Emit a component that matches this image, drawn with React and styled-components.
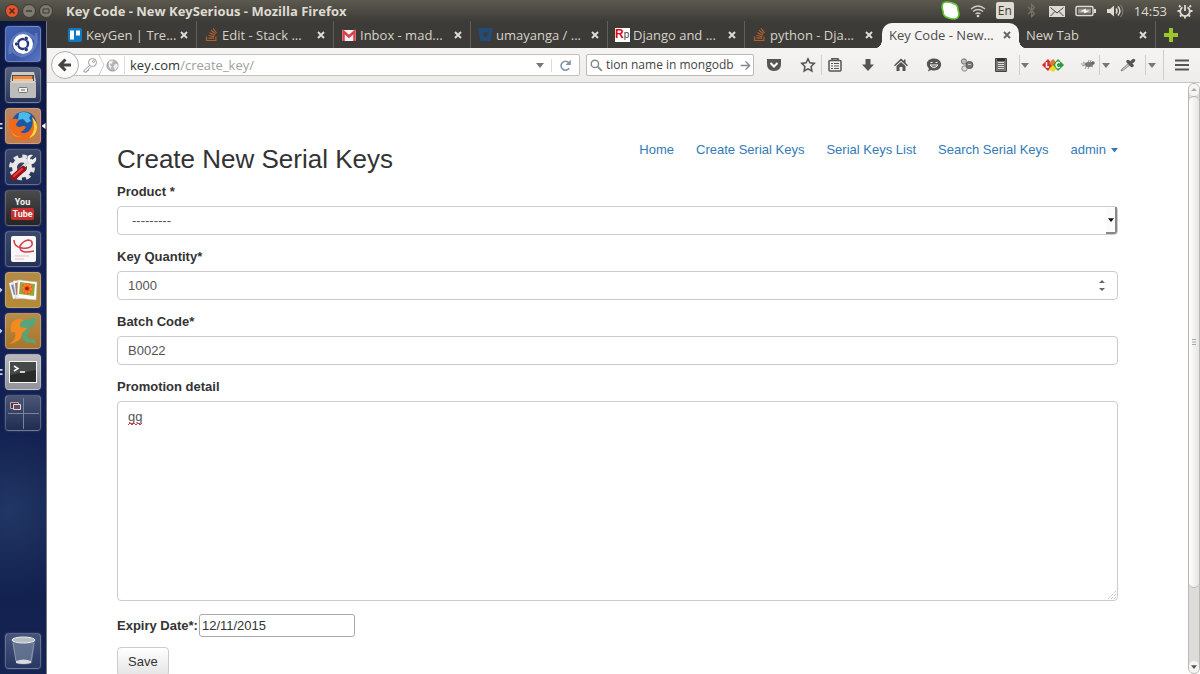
import React, { useState } from "react";
import styled, { createGlobalStyle } from "styled-components";
import { FaBluetoothB, FaBitbucket, FaStackOverflow } from "react-icons/fa";

const GlobalStyle = createGlobalStyle`
  * {
    box-sizing: border-box;
  }

  body {
    margin: 0;
    background: #fff;
    overflow: hidden;
  }

  button, input, select, textarea {
    font: inherit;
    color: inherit;
    margin: 0;
  }
`;

const Desktop = styled.div`
  display: flex;
  flex-direction: column;
  height: 100vh;
  font: 13px/18px "Open Sans", "Noto Sans", sans-serif;
  color: #dfdbd2;
`;

/* top panel */

const Panel = styled.header`
  display: flex;
  align-items: center;
  flex: 0 0 21px;
  padding: 0 7px 0 5px;
  background: linear-gradient(#5c594f, #3d3c37);
`;

const WindowButtons = styled.div`
  display: flex;
  gap: 3px;
  width: 61px;
`;

const WindowButton = styled.button`
  display: flex;
  padding: 0;
  width: 14px;
  height: 14px;
  border: 1px solid #3a3933;
  border-radius: 50%;
  background: ${({ $close }) => ($close ? "#e9542a" : "#7d7a70")};
`;

const WindowTitle = styled.div`
  flex: 1;
  font-weight: 700;
`;

const Indicators = styled.div`
  display: flex;
  align-items: center;
  gap: 10px;
`;

const Language = styled.span`
  width: 18px;
  border-radius: 2px;
  background: #dfdbd2;
  color: #3c3b37;
  font-size: 12px;
  line-height: 17px;
  text-align: center;
`;

const Workspace = styled.div`
  display: flex;
  flex: 1;
  min-height: 0;
`;

/* launcher */

const Launcher = styled.nav`
  display: flex;
  flex-direction: column;
  align-items: center;
  gap: 5px;
  flex: 0 0 47px;
  padding: 5px 1px 5px 0;
  border-right: 1px solid #77777c;
  background: radial-gradient(circle at 20% 75%, #223766, transparent 90px),
    linear-gradient(#0c1740, #13225a 45%, #101d49 75%, #142453);
`;

const LauncherTile = styled.button`
  position: relative;
  display: flex;
  align-items: center;
  justify-content: center;
  flex: 0 0 36px;
  width: 36px;
  padding: 0;
  border: 1px solid rgba(255, 255, 255, 0.22);
  border-radius: 4px;
  background: ${({ $tint }) => $tint};
  box-shadow: 0 0 2px rgba(255, 255, 255, 0.25);

  &:last-child {
    margin-top: auto;
  }
`;

const RunningMark = styled.i`
  position: absolute;
  top: 14px;
  left: -6px;
  width: 3px;
  height: 6px;
  background: #c9d2e6;
  clip-path: ${({ $many }) =>
    $many
      ? "polygon(0 0, 100% 0, 100% 30%, 0 30%, 0 70%, 100% 70%, 100% 100%, 0 100%)"
      : "polygon(0 0, 100% 50%, 0 100%)"};
`;

const FocusMark = styled.i`
  position: absolute;
  top: 14px;
  right: -6px;
  width: 4px;
  height: 6px;
  background: #fff;
  clip-path: polygon(100% 0, 0 50%, 100% 100%);
`;

/* firefox */

const Browser = styled.main`
  display: flex;
  flex-direction: column;
  flex: 1;
  min-width: 0;
`;

const TabStrip = styled.div`
  display: flex;
  flex: 0 0 27px;
  padding-left: 13px;
  background: #3c3b37;
`;

const Tab = styled.div`
  display: flex;
  align-items: center;
  flex: 1 1 137px;
  min-width: 0;
  gap: 3px;
  padding: 0 8px 0 7px;
  color: #d6d2c9;
  border-right: 1px solid ${({ $line }) => ($line ? "#605f59" : "transparent")};
`;

const ActiveTab = styled(Tab)`
  position: relative;
  margin-top: 2px;
  padding-bottom: 2px;
  border: 0;
  border-radius: 10px 10px 0 0;
  background: #f5f4f3;
  color: #4c4c4c;

  &::before,
  &::after {
    content: "";
    position: absolute;
    bottom: 0;
    width: 6px;
    height: 8px;
  }

  &::before {
    right: 100%;
    background: radial-gradient(ellipse 6px 8px at 0 0, transparent 95%, #f5f4f3);
  }

  &::after {
    left: 100%;
    background: radial-gradient(ellipse 6px 8px at 100% 0, transparent 95%, #f5f4f3);
  }
`;

const TabLabel = styled.span`
  flex: 1;
  min-width: 0;
  overflow: hidden;
  white-space: nowrap;
`;

const TabClose = styled.button`
  display: flex;
  padding: 0;
  border: 0;
  background: none;
`;

const NewTab = styled.button`
  display: flex;
  align-items: center;
  flex: 0 0 44px;
  padding: 0 0 0 8px;
  border: 0;
  background: none;
`;

const Toolbar = styled.div`
  display: flex;
  align-items: center;
  flex: 0 0 35px;
  padding-left: 4px;
  background: linear-gradient(#f5f4f3, #eeedec);
  border-bottom: 1px solid #c9c7c4;
  color: #555;
`;

const BackButton = styled.button`
  display: flex;
  align-items: center;
  justify-content: center;
  z-index: 1;
  flex: 0 0 28px;
  height: 28px;
  margin-right: -8px;
  padding: 0;
  border: 1px solid #b1aeaa;
  border-radius: 50%;
  background: #fbfbfb;
`;

const AddressBar = styled.div`
  display: flex;
  align-items: center;
  flex: 1;
  height: 22px;
  padding-left: 10px;
  border: 1px solid #c4c1bd;
  border-radius: 2px;
  background: #fff;
`;

const Address = styled.div`
  flex: 1;
  margin-left: 5px;
  padding-left: 5px;
  border-left: 1px solid #dcdcdc;
  color: #a0a0a0;
`;

const Host = styled.span`
  color: #333;
`;

const Reload = styled.button`
  display: flex;
  align-items: center;
  justify-content: center;
  width: 28px;
  margin-left: 7px;
  padding: 0;
  border: 0;
  border-left: 1px solid #dcdcdc;
  background: none;
`;

const SearchBox = styled.label`
  display: flex;
  align-items: center;
  flex: 0 0 168px;
  min-width: 0;
  height: 22px;
  margin: 0 3px 0 6px;
  padding: 0 2px 0 3px;
  border: 1px solid #bdbab6;
  border-radius: 2px;
  background: #fff;
`;

const SearchInput = styled.input`
  flex: 1;
  width: 0;
  min-width: 0;
  padding: 0;
  padding-left: 3px;
  border: 0;
  outline: 0;
  background: none;
  color: #444;
  font-size: 12px;
`;

const ToolButton = styled.button`
  display: flex;
  align-items: center;
  justify-content: center;
  flex: 0 0 ${({ $width = 33 }) => $width}px;
  height: 20px;
  padding: 0;
  border: 0;
  border-left: ${({ $divided }) => ($divided ? "1px solid #cfcdca" : "0")};
  background: none;
`;

const ToolPair = styled.div`
  display: flex;
  margin: 0 3px 0 4px;
`;

const MenuButton = styled(ToolButton)`
  height: 30px;
  margin-left: 6px;
`;

/* page */

const Viewport = styled.div`
  display: flex;
  flex: 1;
  min-height: 0;
  background: #fff;
`;

const Page = styled.section`
  flex: 1;
  min-width: 0;
  overflow: hidden;
  padding: 58px 70px 0;
  font: 13px/18px "Liberation Sans", Arial, sans-serif;
  color: #333;
`;

const PageHeader = styled.div`
  display: flex;
  justify-content: space-between;
  align-items: flex-start;
  margin-bottom: 7px;
`;

const Heading = styled.h1`
  margin: 0;
  padding-top: 2px;
  font-size: 26px;
  font-weight: 400;
  line-height: 33px;
`;

const SiteNav = styled.nav`
  display: flex;
  gap: 22px;
`;

const NavLink = styled.a`
  display: flex;
  align-items: center;
  gap: 5px;
  color: #337ab7;
  text-decoration: none;
`;

const Field = styled.div`
  display: flex;
  flex-direction: column;
  margin-bottom: 13px;
`;

const Label = styled.label`
  margin-bottom: 5px;
  font-weight: 700;
`;

const Control = styled.div`
  position: relative;
  display: flex;
`;

const Input = styled.input`
  width: 100%;
  height: 29px;
  padding: 0 10px;
  border: 1px solid #ccc;
  border-radius: 4px;
  outline: 0;
  background: #fff;
  color: #555;
  appearance: textfield;

  &::-webkit-inner-spin-button {
    appearance: none;
  }
`;

const Select = styled(Input)`
  padding-left: 14px;
  appearance: none;
`;

const TextArea = styled(Input)`
  height: 200px;
  padding: 6px 10px;
  resize: none;
`;

const SelectArrow = styled.span`
  position: absolute;
  top: 1px;
  right: 1px;
  bottom: 1px;
  display: flex;
  align-items: center;
  justify-content: center;
  width: 11px;
  border-right: 2px solid #888;
  border-bottom: 2px solid #888;
  border-radius: 0 0 3px 0;
  background: #fbfbfb;
  pointer-events: none;
`;

const Spinner = styled.svg`
  position: absolute;
  top: 8px;
  right: 13px;
`;

const Squiggle = styled.svg`
  position: absolute;
  top: 21px;
  left: 11px;
`;

const Grip = styled.svg`
  position: absolute;
  right: 1px;
  bottom: 1px;
`;

const DateRow = styled.div`
  display: flex;
  align-items: center;
  margin-bottom: 10px;
`;

const DateLabel = styled.label`
  font-weight: 700;
`;

const DateInput = styled.input`
  width: 156px;
  height: 23px;
  margin-left: 1px;
  padding: 0 2px;
  border: 1px solid #aaa;
  border-radius: 3px;
  outline: 0;
`;

const SaveButton = styled.button`
  height: 30px;
  padding: 0 10px;
  border: 1px solid #ccc;
  border-radius: 4px;
  background: linear-gradient(#fff, #e4e4e4);
`;

const Scrollbar = styled.div`
  display: flex;
  flex-direction: column;
  flex: 0 0 12px;
  border: 1px solid #bbb8b4;
  border-radius: 6px;
  background: #dedcda;
`;

const ScrollStep = styled.button`
  display: flex;
  align-items: center;
  justify-content: center;
  flex: 0 0 12px;
  padding: 0;
  border: 0;
  border-radius: 5px;
  background: #f6f5f4;
`;

const ScrollTrack = styled.div`
  flex: 1;
`;

const ScrollThumb = styled.div`
  display: flex;
  align-items: center;
  justify-content: center;
  height: 87%;
  border: 1px solid #b5b2ae;
  border-width: 1px 0;
  border-radius: 5px;
  background: linear-gradient(90deg, #fff, #e7e5e3);
`;

/* icons */

const Svg = ({ size = 16, box = 16, width, children }) => (
  <svg
    width={width || size}
    height={size}
    viewBox={`0 0 ${width ? (width / size) * box : box} ${box}`}
    fill="none"
    aria-hidden="true"
  >
    {children}
  </svg>
);

const Cross = ({ color }) => (
  <Svg size={8} box={8}>
    <path d="M1 1l6 6M7 1L1 7" stroke={color} strokeWidth="2" />
  </Svg>
);

const Caret = ({ color = "#777", width = 8 }) => (
  <svg width={width} height={width / 2 + 1} viewBox="0 0 8 5" aria-hidden="true">
    <path d="M0 0h8L4 5z" fill={color} />
  </svg>
);

const UbuntuIcon = () => (
  <Svg size={34} box={34}>
    <path d="M4 27Q3 8 18 6q9 1 13 10M30 6q2 19-14 23-8-1-12-10" stroke="#8ea6dd" strokeWidth="3" opacity=".4" />
    <circle cx="17" cy="17" r="10" fill="#fff" />
    <circle cx="17" cy="17" r="5" stroke="#253b7e" strokeWidth="2.4" />
    <path d="M12 17H9M19.5 12.7L21 10M19.5 21.3L21 24" stroke="#fff" strokeWidth="4" />
    <g fill="#253b7e">
      <circle cx="10.6" cy="17" r="1.8" />
      <circle cx="20.2" cy="11.4" r="1.8" />
      <circle cx="20.2" cy="22.6" r="1.8" />
    </g>
  </Svg>
);

const FilesIcon = () => (
  <Svg size={34} box={34}>
    <path d="M6 4h22l2 9H4z" fill="#c9c9c7" />
    <path d="M6 7h22v7H6z" fill="#5c4a3d" />
    <path d="M7 8h19l1 6H7z" fill="#e8894a" />
    <path d="M7 11h20v3H7z" fill="#f7c08f" />
    <rect x="4" y="13" width="26" height="17" rx="1.5" fill="#bdbdbb" />
    <path d="M5 14h24" stroke="#e9e9e8" />
    <rect x="12.5" y="19.5" width="9" height="5" rx="1" fill="#efefef" stroke="#777" />
    <path d="M15 22h4" stroke="#666" />
  </Svg>
);

const FirefoxIcon = () => (
  <Svg size={34} box={34}>
    <circle cx="18" cy="15" r="12.5" fill="#1d57a5" />
    <path d="M13 4q7-3 12 2l-2 3 2 3-4 2-4-4-5 1z" fill="#4eb8e6" />
    <path d="M4 7q1 3 3 3 3-1 6 1l-3 4q0 3 4 3 4-2 6 0-2 4-6 5 6 3 10-2 4-5 2-13 5 5 4 11-1 12-13 12Q4 31 3 18 2 13 4 7z" fill="#ee6b1d" />
    <path d="M26 8q5 4 5 11-1 8-8 10 5-5 5-11 0-5-2-10z" fill="#fbd33c" />
    <path d="M4 19q2 8 11 9-9 1-11-9z" fill="#f9a62b" />
  </Svg>
);

const SettingsIcon = () => (
  <Svg size={34} box={34}>
    <circle cx="16" cy="17.500" r="11" stroke="#e4e4e4" strokeWidth="4" strokeDasharray="4.600 4.040" />
    <circle cx="16" cy="17.500" r="7.500" stroke="#e9e9e9" strokeWidth="5" />
    <path d="M14 20l9-9" stroke="#ddd" strokeWidth="3.500" />
    <path d="M27 5l-3 3q0 2 2 2l4-3q1 4-2 6-3 1-5-1-3-3-1-6 2-2 5-1z" fill="#f2f2f2" />
    <path d="M8 27l9-8" stroke="#a30f16" strokeWidth="6" strokeLinecap="round" />
    <path d="M8 26l8-7" stroke="#e13d40" strokeWidth="2" strokeLinecap="round" />
  </Svg>
);

const YouTubeTile = styled.span`
  display: flex;
  flex-direction: column;
  align-items: center;
  color: #f5f5f5;
  font: 700 9px/12px "Roboto", sans-serif;
`;

const TubeText = styled.span`
  padding: 0 1px;
  border-radius: 2px;
  background: #c4302f;
`;

const DocumentIcon = () => (
  <Svg size={34} box={34}>
    <rect x="5" y="4" width="25" height="26" rx="2" fill="#f8f8f8" />
    <path d="M8 8q0 7 8 8 8 1 10-3 1-5-4-5-5 1-8 6-1 5 5 6 5 0 9-1" stroke="#d63c49" strokeWidth="1.600" />
    <path d="M9 24h14M9 27h9" stroke="#e9babf" />
  </Svg>
);

const PhotosIcon = () => (
  <Svg size={34} box={34}>
    <path d="M3 10l8-2 4 16-8 2z" fill="#f4f4f4" />
    <path d="M5 12l4-1 2 10-3 1z" fill="#6a8ac0" />
    <path d="M7 8l9-1 2 18-8 1z" fill="#fff" stroke="#bbb" strokeWidth=".5" />
    <path d="M9 10l5-1v12l-4 1z" fill="#b37357" />
    <path d="M12 7l19 2-1 18-19-2z" fill="#fff" stroke="#bbb" strokeWidth=".5" />
    <path d="M14 9l15 2-1 12-15-2z" fill="#8eaa3c" />
    <circle cx="21" cy="15.500" r="5.500" fill="#f0601f" />
    <circle cx="21" cy="15.500" r="4" stroke="#f98b27" strokeWidth="2" strokeDasharray="2 1" />
    <circle cx="21" cy="15.500" r="1.800" fill="#8b2612" />
  </Svg>
);

const CompareIcon = () => (
  <Svg size={34} box={34}>
    <path d="M3 30q8-4 6-12H5Q3 6 13 5q6 0 8 5 1 7-5 9 0 9-13 11z" fill="#f28a20" />
    <path d="M14 13q-1-6 5-7 4 0 5-1 4-2 6-1 0 9-8 10-4 0-8-1z" fill="#55a57d" />
    <path d="M26 16q-8-2-10 5 0 9 12 8l3 1-3-5q-6 1-7-3 0-4 5-6z" fill="#55a57d" />
  </Svg>
);

const TerminalIcon = () => (
  <Svg size={34} box={34}>
    <rect x="3.500" y="6.500" width="27" height="21" fill="#282b2a" stroke="#f4f4f4" />
    <path d="M4 7h26v8L4 20z" fill="#454948" />
    <path d="M8 11l4 2.500L8 16M14 17h5" stroke="#fff" strokeWidth="1.500" />
  </Svg>
);

const WorkspacesIcon = () => (
  <Svg size={34} box={34}>
    <path d="M17.500 2v31M2 17.500h31" stroke="#7583a5" />
    <path d="M4.500 6.500h8v6h-8z" stroke="#c9a3a8" fill="#47374e" />
    <path d="M7.500 8.500h7v5h-7z" stroke="#e1dce0" fill="#694953" />
  </Svg>
);

const TrashIcon = () => (
  <Svg size={34} box={34}>
    <path d="M6 6h23l-3 23q-8 3-16 0z" fill="#7987a1" opacity=".65" />
    <ellipse cx="17.500" cy="6" rx="11.500" ry="3" fill="#b6bdc5" stroke="#eef0f1" />
    <path d="M7 9l3 18M28 9l-3 18" stroke="#b8c2d0" opacity=".5" />
    <path d="M10 27q8-3 15 0v2q-8 2-15 0z" fill="#d8dce0" />
  </Svg>
);

const launcherItems = [
  { name: "Dash", tint: "linear-gradient(135deg, #4364b7, #3b57a4 60%, #5b79c7)", icon: <UbuntuIcon /> },
  { name: "Files", tint: "linear-gradient(#56627e, #29365b)", icon: <FilesIcon /> },
  { name: "Firefox", tint: "linear-gradient(#b98766, #c17c49)", icon: <FirefoxIcon />, running: true, many: true, focus: true },
  { name: "System Settings", tint: "linear-gradient(#3b4869, #25335a)", icon: <SettingsIcon /> },
  {
    name: "YouTube",
    tint: "linear-gradient(#4a4a4b, #252528)",
    icon: (
      <YouTubeTile>
        <span>You</span>
        <TubeText>Tube</TubeText>
      </YouTubeTile>
    ),
  },
  { name: "Document Viewer", tint: "linear-gradient(#3b4869, #25335a)", icon: <DocumentIcon /> },
  { name: "Image Viewer", tint: "linear-gradient(#b18b4a, #b48a35)", icon: <PhotosIcon />, running: true },
  { name: "PyCharm", tint: "linear-gradient(#b58c49, #a9752c)", icon: <CompareIcon />, running: true },
  { name: "Terminal", tint: "linear-gradient(#b9b9bc, #92939b)", icon: <TerminalIcon />, running: true, many: true },
  { name: "Workspaces", tint: "linear-gradient(#4b5674, #202d53)", icon: <WorkspacesIcon /> },
  { name: "Trash", tint: "linear-gradient(#47557c, #283763)", icon: <TrashIcon /> },
];

const TrelloIcon = () => (
  <Svg>
    <rect x="1" y="1" width="14" height="14" rx="2" fill="#0d7ac4" />
    <path d="M3 3.500h4v9H3zM9 3.500h4v5H9z" fill="#fff" />
  </Svg>
);

const MailFavicon = () => (
  <Svg>
    <rect x="1" y="3" width="14" height="11" rx="1" fill="#f3f1f0" />
    <path d="M2.500 14V4.500L8 9.500l5.500-5V14" stroke="#d8404a" strokeWidth="2.500" />
  </Svg>
);

const RpIcon = styled.span`
  flex: 0 0 15px;
  height: 14px;
  background: #fff;
  color: #e30613;
  font: 700 12px/13px "Liberation Sans", sans-serif;

  span {
    color: #444;
    font-weight: 400;
    font-size: 10px;
  }
`;

const tabs = [
  { title: "KeyGen | Tre...", icon: <TrelloIcon />, line: true },
  { title: "Edit - Stack ...", icon: <FaStackOverflow size={15} color="#b0602b" />, line: true },
  { title: "Inbox - mad...", icon: <MailFavicon />, line: true },
  { title: "umayanga / ...", icon: <FaBitbucket size={15} color="#244b77" />, line: true },
  { title: "Django and ...", icon: <RpIcon>R<span>p</span></RpIcon>, line: true },
  { title: "python - Dja...", icon: <FaStackOverflow size={15} color="#b0602b" /> },
  { title: "Key Code - New...", active: true },
  { title: "New Tab", line: true },
];

const KeyIcon = () => (
  <Svg>
    <path d="M7.500 8.500L2 13.500V15h3v-1.500h1.500V12l2-2" stroke="#999" />
    <circle cx="10.500" cy="5.500" r="4" stroke="#999" />
    <circle cx="11.500" cy="4.500" r="1" stroke="#999" />
  </Svg>
);

const GlobeIcon = () => (
  <Svg size={13} box={14}>
    <circle cx="7" cy="7" r="6" fill="#b5b5b5" stroke="#999" />
    <path d="M3 3q2-2 5-1L6 5 4 6l2 2-1 3-2-3zM9 6l3-1 1 3-3 4-2-3z" fill="#eee" />
  </Svg>
);

const PocketIcon = () => (
  <Svg>
    <path d="M1 2h14v5q0 7-7 7T1 7z" fill="#555" />
    <path d="M4.500 6L8 9.500 11.500 6" stroke="#fff" strokeWidth="2" />
  </Svg>
);

const StarIcon = () => (
  <Svg>
    <path d="M8 1.800l1.900 4 4.400.6-3.200 3.100.8 4.500L8 11.800 4.100 14l.8-4.500-3.200-3.100 4.400-.6z" stroke="#555" strokeWidth="1.500" />
  </Svg>
);

const ListIcon = () => (
  <Svg>
    <rect x="2" y="3.500" width="12" height="10.500" rx="1" stroke="#555" strokeWidth="1.500" />
    <path d="M5 3.500V1.700h6v1.800" stroke="#555" strokeWidth="1.500" />
    <path d="M4 6.500h2M7 6.500h5M4 9h2M7 9h5M4 11.500h2M7 11.500h5" stroke="#555" />
  </Svg>
);

const DownloadIcon = () => (
  <Svg>
    <path d="M5.500 2h5v5.500H14L8 14 2 7.500h3.500z" fill="#555" />
  </Svg>
);

const HomeIcon = () => (
  <Svg>
    <path d="M8 1.500L1 8.300l1 1L8 3.800l6 5.500 1-1-2.500-2.500V2.500H11V4z" fill="#555" />
    <path d="M3.500 9L8 5l4.500 4v5H9.500v-4h-3v4h-3z" fill="#555" />
  </Svg>
);

const ChatIcon = () => (
  <Svg>
    <path d="M8 1.500c9.500 0 9.500 12 0 12-1 0-2 0-3-.5L2 14.500l1-3C-1.500 7 1.500 1.500 8 1.500z" fill="#555" />
    <path d="M4.500 5.500h2M9.500 5.500h2M4 8q4 5 8 0z" stroke="#fff" />
  </Svg>
);

const ButtonsIcon = () => (
  <Svg>
    <circle cx="5" cy="4.500" r="2.700" fill="#bbb" stroke="#777" />
    <circle cx="5.500" cy="11.500" r="2.700" fill="#ddd" stroke="#888" />
    <circle cx="10.500" cy="8" r="3.500" fill="#777" stroke="#555" />
    <path d="M9 7.500h3" stroke="#ccc" />
  </Svg>
);

const NotesIcon = () => (
  <Svg>
    <path d="M2.500 1.500h11v13h-11z" fill="#777" stroke="#444" />
    <path d="M5 5h6v8H5z" fill="#ddd" />
    <path d="M5 6.500h6M5 8.500h6M5 10.500h6M5 12.500h6" stroke="#666" />
    <path d="M4 1v3h8V1" fill="#333" />
  </Svg>
);

const DiamondsIcon = () => (
  <Svg width={24}>
    <path d="M1 8l6-6 5 6-5 6z" fill="#d52d2d" />
    <path d="M12 2l4 4-4 4-4-4z" fill="#e7792e" />
    <path d="M12 8l4 4-4 3-4-3z" fill="#f0d91f" />
    <path d="M12 8l5-6 6 6-6 6z" fill="#2b9c3b" />
    <path d="M5.500 5v5H8M19 6q-3-2-4 2 1 4 4 2" stroke="#fff" strokeWidth="1.500" />
  </Svg>
);

const BugIcon = () => (
  <Svg>
    <path d="M3 5l10 5M2 9l11-4M5 12l4-9M8 12l3-9M1 7h5" stroke="#999" />
    <ellipse cx="9" cy="7.500" rx="4" ry="2.500" fill="#777" />
    <circle cx="13" cy="6" r="1.700" fill="#666" />
  </Svg>
);

const DropperIcon = () => (
  <Svg>
    <path d="M1 14l1-2 7-6 1.500 1.500L3.500 13z" fill="#ccc" stroke="#888" />
    <path d="M8 4.500L12 8.500M10 6.500l3.500-3" stroke="#555" strokeWidth="3.500" strokeLinecap="round" />
  </Svg>
);

const WifiIcon = () => (
  <Svg>
    <path d="M1 6q7-6 14 0M3 8.500q5-4 10 0M5.500 11q2.500-2 5 0" stroke="#cfccc4" strokeWidth="1.300" />
    <circle cx="8" cy="13" r="1.300" fill="#dfdbd2" />
  </Svg>
);

const EnvelopeIcon = () => (
  <Svg>
    <path d="M0 3h16v11H0z" fill="#dfdbd2" />
    <path d="M1.500 4.500L8 10l6.500-5.500M1.500 13L6 8.500M14.500 13L10 8.500" stroke="#45443f" />
  </Svg>
);

const BatteryIcon = () => (
  <Svg width={21}>
    <rect x="1" y="3.500" width="17" height="9" rx="1.500" stroke="#dfdbd2" strokeWidth="1.500" />
    <path d="M19 6h2v4h-2z" fill="#dfdbd2" />
    <path d="M3 5.500h13v5H3z" fill="#98958c" />
    <path d="M5 8.500l6-3-.5 2H15l-6 3 .5-2z" fill="#fff" />
  </Svg>
);

const VolumeIcon = () => (
  <Svg width={18}>
    <path d="M1 6h3l4-3.500v11L4 10H1z" fill="#dfdbd2" />
    <path d="M10 5.500q2 2.500 0 5M12 3.500q4 4.500 0 9" stroke="#dfdbd2" strokeWidth="1.500" />
    <path d="M14.500 2q5 6 0 12" stroke="#88857c" />
  </Svg>
);

const PowerIcon = () => (
  <Svg>
    <path d="M5.500 4.200a4.800 4.800 0 1 0 5 0M8 2v6" stroke="#dfdbd2" strokeWidth="1.800" />
    <path d="M3.500 4L2 2.500M12.500 4L14 2.500M3 8H.5M13 8h2.500M4.500 12L3 13.500M11.500 12l1.500 1.500M8 13v2.500" stroke="#dfdbd2" strokeWidth="1.800" />
  </Svg>
);

const SkypeIcon = () => (
  <Svg size={19} box={18}>
    <path d="M5 1q3 0 6 1 5 1 5 6l1 4q0 4-4 5-3 0-6-1-5-1-5-6L1 6q0-5 4-5z" fill="#fff" stroke="#61c832" strokeWidth="1.500" />
  </Svg>
);

const navItems = ["Home", "Create Serial Keys", "Serial Keys List", "Search Serial Keys"];

const TopPanel = () => (
  <Panel>
    <WindowButtons>
      <WindowButton $close aria-label="Close window">
        <Svg size={12} box={12}>
          <path d="M3.500 3.500l5 5M8.500 3.500l-5 5" stroke="#4b2b1f" strokeWidth="1.500" />
        </Svg>
      </WindowButton>
      <WindowButton aria-label="Minimize">
        <Svg size={12} box={12}>
          <path d="M3 6h6" stroke="#3c3b37" strokeWidth="1.500" />
        </Svg>
      </WindowButton>
      <WindowButton aria-label="Restore">
        <Svg size={12} box={12}>
          <path d="M3 4h6v4H3z" stroke="#3c3b37" />
        </Svg>
      </WindowButton>
    </WindowButtons>
    <WindowTitle>Key Code - New KeySerious - Mozilla Firefox</WindowTitle>
    <Indicators>
      <SkypeIcon />
      <WifiIcon />
      <Language>En</Language>
      <FaBluetoothB size={15} color="#77746b" />
      <EnvelopeIcon />
      <BatteryIcon />
      <VolumeIcon />
      <span>14:53</span>
      <PowerIcon />
    </Indicators>
  </Panel>
);

const BrowserToolbar = () => {
  const [query, setQuery] = useState("tion name in mongodb");
  return (
    <Toolbar>
      <BackButton aria-label="Back">
        <Svg>
          <path d="M14 8H4M8.500 2.500L3 8l5.500 5.500" stroke="#444" strokeWidth="3" />
        </Svg>
      </BackButton>
      <AddressBar>
        <KeyIcon />
        <Svg width={8} size={20} box={20}>
          <path d="M1 0l5 10-5 10" stroke="#ccc" />
        </Svg>
        <GlobeIcon />
        <Address>
          <Host>key.com</Host>/create_key/
        </Address>
        <Caret />
        <Reload aria-label="Reload">
          <Svg size={13}>
            <path d="M12.500 11.500A5.500 5.500 0 1 1 12 4.500" stroke="#8394a5" strokeWidth="2" />
            <path d="M14.500 1v6.500H8z" fill="#8394a5" />
          </Svg>
        </Reload>
      </AddressBar>
      <SearchBox>
        <Svg size={13}>
          <circle cx="6" cy="6" r="4.500" stroke="#888" strokeWidth="1.800" />
          <path d="M9.500 9.500l5 5" stroke="#888" strokeWidth="2.200" />
        </Svg>
        <SearchInput aria-label="Search" value={query} onChange={(e) => setQuery(e.target.value)} />
        <Svg size={11}>
          <path d="M1 8h12M8 2l6 6-6 6" stroke="#7a8a99" strokeWidth="2" />
        </Svg>
      </SearchBox>
      <ToolButton aria-label="Pocket"><PocketIcon /></ToolButton>
      <ToolPair>
        <ToolButton $width={27} aria-label="Bookmark"><StarIcon /></ToolButton>
        <ToolButton $width={27} $divided aria-label="Bookmarks list"><ListIcon /></ToolButton>
      </ToolPair>
      <ToolButton aria-label="Downloads"><DownloadIcon /></ToolButton>
      <ToolButton aria-label="Home"><HomeIcon /></ToolButton>
      <ToolButton aria-label="Hello"><ChatIcon /></ToolButton>
      <ToolButton aria-label="Share"><ButtonsIcon /></ToolButton>
      <ToolButton $width={36} aria-label="Notes"><NotesIcon /></ToolButton>
      <ToolButton $width={10} $divided aria-label="Notes menu"><Caret /></ToolButton>
      <ToolButton $width={48} aria-label="Colors"><DiamondsIcon /></ToolButton>
      <ToolButton $width={22} aria-label="Firebug"><BugIcon /></ToolButton>
      <ToolButton $width={12} $divided aria-label="Firebug menu"><Caret /></ToolButton>
      <ToolButton $width={34} aria-label="Color picker"><DropperIcon /></ToolButton>
      <ToolButton $width={12} $divided aria-label="Color picker menu"><Caret /></ToolButton>
      <MenuButton $width={37} $divided aria-label="Menu">
        <Svg>
          <path d="M1 3.500h14M1 8h14M1 12.500h14" stroke="#555" strokeWidth="2" />
        </Svg>
      </MenuButton>
    </Toolbar>
  );
};

const KeyForm = () => {
  const [values, setValues] = useState({
    product: "",
    quantity: "1000",
    batch: "B0022",
    promotion: "gg",
    expiry: "12/11/2015",
  });
  const onChange = (e) => setValues({ ...values, [e.target.name]: e.target.value });

  return (
    <form onSubmit={(e) => e.preventDefault()}>
      <Field>
        <Label htmlFor="product">Product *</Label>
        <Control>
          <Select as="select" id="product" name="product" value={values.product} onChange={onChange}>
            <option value="">---------</option>
          </Select>
          <SelectArrow>
            <Caret color="#111" width={6} />
          </SelectArrow>
        </Control>
      </Field>
      <Field>
        <Label htmlFor="quantity">Key Quantity*</Label>
        <Control>
          <Input type="number" id="quantity" name="quantity" value={values.quantity} onChange={onChange} />
          <Spinner width="6" height="13" viewBox="0 0 6 13">
            <path d="M0 4l3-3 3 3zM0 9l3 3 3-3z" fill="#666" />
          </Spinner>
        </Control>
      </Field>
      <Field>
        <Label htmlFor="batch">Batch Code*</Label>
        <Input id="batch" name="batch" value={values.batch} onChange={onChange} />
      </Field>
      <Field>
        <Label htmlFor="promotion">Promotion detail</Label>
        <Control>
          <TextArea as="textarea" id="promotion" name="promotion" spellCheck={false} value={values.promotion} onChange={onChange} />
          <Squiggle width="15" height="4" viewBox="0 0 15 4" fill="none">
            <path d="M0 3l2-2 2 2 2-2 2 2 2-2 2 2 2-2" stroke="#e0383e" />
          </Squiggle>
          <Grip width="10" height="10" viewBox="0 0 10 10">
            <path d="M1 9L9 1M4 9l5-5M7 9l2-2" stroke="#aaa" strokeDasharray="1 1" />
          </Grip>
        </Control>
      </Field>
      <DateRow>
        <DateLabel htmlFor="expiry">Expiry Date*:</DateLabel>
        <DateInput id="expiry" name="expiry" value={values.expiry} onChange={onChange} />
      </DateRow>
      <SaveButton type="submit">Save</SaveButton>
    </form>
  );
};

export default function App() {
  return (
    <Desktop>
      <GlobalStyle />
      <TopPanel />
      <Workspace>
        <Launcher>
          {launcherItems.map(({ name, tint, icon, running, many, focus }) => (
            <LauncherTile key={name} $tint={tint} aria-label={name}>
              {icon}
              {running && <RunningMark $many={many} />}
              {focus && <FocusMark />}
            </LauncherTile>
          ))}
        </Launcher>
        <Browser>
          <TabStrip>
            {tabs.map(({ title, icon, active, line }) => {
              const Item = active ? ActiveTab : Tab;
              return (
                <Item key={title} $line={line}>
                  {icon}
                  <TabLabel>{title}</TabLabel>
                  <TabClose aria-label="Close tab">
                    <Cross color={active ? "#666" : "#dfdbd2"} />
                  </TabClose>
                </Item>
              );
            })}
            <NewTab aria-label="Open a new tab">
              <Svg size={14} box={14}>
                <path d="M5 0h4v5h5v4H9v5H5V9H0V5h5z" fill="#9cc827" />
              </Svg>
            </NewTab>
          </TabStrip>
          <BrowserToolbar />
          <Viewport>
            <Page>
              <PageHeader>
                <Heading>Create New Serial Keys</Heading>
                <SiteNav>
                  {navItems.map((item) => (
                    <NavLink key={item} href="#">{item}</NavLink>
                  ))}
                  <NavLink href="#">
                    admin <Caret color="#337ab7" width={7} />
                  </NavLink>
                </SiteNav>
              </PageHeader>
              <KeyForm />
            </Page>
            <Scrollbar>
              <ScrollStep aria-label="Scroll up">
                <Svg size={6} box={6}><path d="M0 4l3-3 3 3z" fill="#aaa" /></Svg>
              </ScrollStep>
              <ScrollTrack>
                <ScrollThumb>
                  <Svg size={6} box={6}><path d="M1 .5h4M1 3h4M1 5.500h4" stroke="#aaa" /></Svg>
                </ScrollThumb>
              </ScrollTrack>
              <ScrollStep aria-label="Scroll down">
                <Caret color="#555" width={6} />
              </ScrollStep>
            </Scrollbar>
          </Viewport>
        </Browser>
      </Workspace>
    </Desktop>
  );
}
